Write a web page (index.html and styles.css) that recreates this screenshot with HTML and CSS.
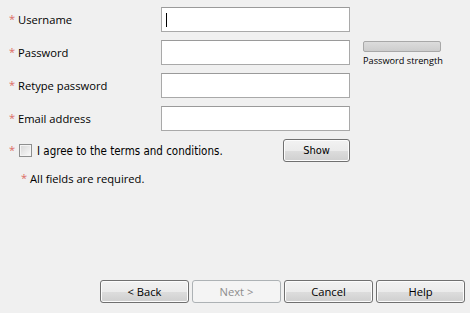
FILE: index.html
```html
<!DOCTYPE html>
<html>
<head>
<meta charset="utf-8">
<link rel="stylesheet" href="styles.css">
</head>
<body>
<div class="dialog">
  <div class="form">
    <div class="label"><span class="req">*</span>Username</div>
    <div class="field"><span class="caret"></span></div>
    <div></div>

    <div class="label"><span class="req">*</span>Password</div>
    <div class="field"></div>
    <div class="strength">
      <div class="meter"></div>
      <div class="meter-text">Password strength</div>
    </div>

    <div class="label"><span class="req">*</span>Retype password</div>
    <div class="field"></div>
    <div></div>

    <div class="label"><span class="req">*</span>Email address</div>
    <div class="field"></div>
    <div></div>
  </div>

  <div class="agree-row">
    <div class="agree">
      <span class="req">*</span>
      <span class="checkbox"></span>
      <span class="agree-text">I agree to the terms and conditions.</span>
    </div>
    <button class="btn show">Show</button>
  </div>

  <div class="note"><span class="req">*</span>All fields are required.</div>

  <div class="buttons">
    <button class="btn">&lt; Back</button>
    <button class="btn disabled">Next &gt;</button>
    <button class="btn">Cancel</button>
    <button class="btn">Help</button>
  </div>
</div>
</body>
</html>
```

FILE: styles.css
```css
html, body {
  margin: 0;
  padding: 0;
  background: #f0f0f0;
}

.dialog {
  width: 470px;
  height: 313px;
  display: flex;
  flex-direction: column;
  font-family: "Open Sans", "Noto Sans", sans-serif;
  font-size: 11.2px;
  color: #000;
  box-sizing: border-box;
}

.form {
  display: grid;
  grid-template-columns: 152px 189px auto;
  grid-auto-rows: 25px;
  row-gap: 8px;
  padding: 7px 0 0 9px;
}

.label {
  display: flex;
  align-items: center;
}

.req {
  color: #dc6a64;
  font-size: 11px;
  width: 9px;
  display: inline-block;
  position: relative;
  top: -1px;
}

.field {
  background: #fff;
  border: 1px solid #a9a9a9;
  border-top-color: #9a9a9a;
  box-sizing: border-box;
  display: flex;
  align-items: center;
  padding-left: 4px;
}

.caret {
  display: inline-block;
  width: 1px;
  height: 14px;
  background: #000;
}

.strength {
  margin-left: 13px;
  padding-top: 1px;
}

.meter {
  width: 78px;
  height: 11px;
  box-sizing: border-box;
  border: 1px solid #a8a8a8;
  border-radius: 2px;
  background: linear-gradient(#dcdcdc, #cdcdcd);
}

.meter-text {
  font-size: 9.2px;
  margin-top: 3px;
  white-space: nowrap;
  line-height: 12px;
}

.agree-row {
  display: flex;
  align-items: center;
  margin-top: 8px;
  padding-left: 9px;
}

.agree {
  width: 274px;
  display: flex;
  align-items: center;
}

.agree .req {
  width: 10px;
}

.checkbox {
  width: 13px;
  height: 13px;
  box-sizing: border-box;
  border: 1px solid #8e8f8f;
  background: linear-gradient(135deg, #d6d6d6, #fbfbfb);
  box-shadow: inset 0 0 0 1px #f4f4f4;
  margin-right: 5px;
}

.agree-text {
  font-family: "DejaVu Sans Condensed", "DejaVu Sans", sans-serif;
  font-size: 11.5px;
}

.btn {
  font-family: "Open Sans", "Noto Sans", sans-serif;
  font-size: 11.2px;
  color: #000;
  height: 23px;
  padding: 0;
  border: 1px solid #707070;
  border-radius: 3px;
  background: linear-gradient(#f2f2f2 0%, #ebebeb 50%, #dddddd 51%, #cfcfcf 100%);
  box-shadow: inset 0 0 0 1px #fcfcfc;
}

.show {
  width: 67px;
  font-family: "DejaVu Sans Condensed", "DejaVu Sans", sans-serif;
  font-size: 11px;
}

.note {
  margin-top: 9px;
  padding-left: 21px;
  line-height: 16px;
}

.buttons {
  margin-top: auto;
  display: flex;
  justify-content: flex-end;
  gap: 3px;
  padding: 0 5px 10px 0;
}

.buttons .btn {
  width: 89px;
}

.btn.disabled {
  color: #8d8d8d;
  border-color: #adb2b5;
  background: #f4f4f4;
  box-shadow: none;
}
```
